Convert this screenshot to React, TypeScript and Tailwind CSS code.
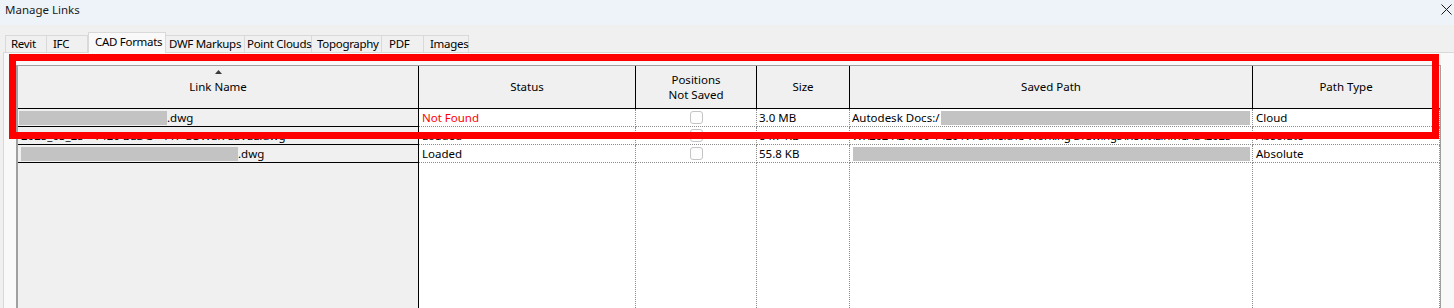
import React from 'react';

type Row = {
  linkBox?: number;
  linkText: string;
  status: string;
  notFound?: boolean;
  size: string;
  pathText?: string;
  pathBox?: boolean;
  pathType: string;
};

const rows: Row[] = [
  { linkBox: 148, linkText: '.dwg', status: 'Not Found', notFound: true, size: '3.0 MB', pathText: 'Autodesk Docs:/', pathBox: true, pathType: 'Cloud' },
  { linkText: '2025_03_25 - 1420 BLDG - TYP LOWER LEVEL.dwg', status: 'Loaded', size: '84.7 KB', pathText: 'W:\\2024\\24060-1420 N Fairfield\\C-Working Drawings\\Revit\\Link\\CAD\\2025', pathType: 'Absolute' },
  { linkBox: 217, linkText: '.dwg', status: 'Loaded', size: '55.8 KB', pathBox: true, pathType: 'Absolute' },
];

// 탭 폭과 글자 시작 위치
const tabs = [
  { label: 'Revit', w: 'w-[42px] border-l', pl: 'pl-[5px]' },
  { label: 'IFC', w: 'w-[41px]', pl: 'pl-[6px]' },
  { label: 'CAD Formats', w: 'w-[78px]', pl: 'pl-[6px]', active: true },
  { label: 'DWF Markups', w: 'w-[79px]', pl: 'pl-[3px]' },
  { label: 'Point Clouds', w: 'w-[67px]', pl: 'pl-[2px]' },
  { label: 'Topography', w: 'w-[70px]', pl: 'pl-[5px]' },
  { label: 'PDF', w: 'w-[42px]', pl: 'pl-[7px]' },
  { label: 'Images', w: 'w-[45px]', pl: 'pl-[6px]' },
];

const Redact = ({ className }: { className: string }) => (
  <span className={`h-[14px] bg-[#c3c3c3] flex-none ${className}`} />
);

const CheckBox = () => (
  <span className="w-[13px] h-[13px] rounded-[3px] border border-[#c4c4c4] bg-[#fdfdfd]" />
);

const cell = 'h-full flex items-center overflow-hidden whitespace-nowrap border-r border-b border-dotted border-[#8c8c8c]';

export default function App() {
  return (
    <div className="relative w-[1454px] h-[308px] overflow-hidden bg-[#f0f0f0] flex flex-col font-['Noto_Sans',sans-serif] text-[11.5px] text-black">
      {/* 제목 표시줄 */}
      <div className="h-[25px] flex-none flex justify-between bg-[#eef3f9]">
        <span className="pl-[5px] pt-[2px] leading-[16px] text-[11.5px] text-[#1a1a1a]">Manage Links</span>
        <svg className="mt-[4px] mr-[2px]" width="11" height="11" viewBox="0 0 11 11">
          <path d="M0.5 0.5L10.5 10.5M10.5 0.5L0.5 10.5" stroke="#1a1a1a" strokeWidth="1" fill="none" />
        </svg>
      </div>

      {/* 탭 */}
      <div className="h-[27px] flex-none flex items-end pl-[5px] whitespace-nowrap tracking-[-0.3px]">
        {tabs.map((t) =>
          t.active ? (
            <div
              key={t.label}
              className={`${t.w} ${t.pl} relative z-10 -mb-[1px] h-[21px] flex-none flex items-center pb-[2px] bg-[#f9f9f9] border-l border-t border-r border-[#d9d9d9] leading-[16px]`}
            >
              {t.label}
            </div>
          ) : (
            <div
              key={t.label}
              className={`${t.w} ${t.pl} h-[17px] flex-none flex items-center border-t border-r border-[#d9d9d9] leading-[16px]`}
            >
              {t.label}
            </div>
          )
        )}
      </div>

      {/* 탭 패널 */}
      <div className="flex-1 flex flex-col ml-[3px] border-l border-t border-[#d9d9d9] bg-[#f9f9f9] pl-[12px] pt-[12px]">
        <div className="flex-1 flex flex-col w-[1425px] border-l-2 border-t border-r border-[#a0a0a0] bg-white">
          {/* 헤더 */}
          <div className="h-[43px] flex-none flex bg-[#f0f0f0] border-b border-black">
            <div className="relative w-[401px] h-full flex items-center justify-center border-r border-black">
              <svg className="absolute top-[4px] left-[197px]" width="7" height="4" viewBox="0 0 7 4">
                <polygon points="3.5,0 7,4 0,4" fill="#3a3a3a" />
              </svg>
              Link Name
            </div>
            <div className="w-[217px] h-full flex items-center justify-center border-r border-black">Status</div>
            <div className="w-[121px] h-full flex flex-col items-center justify-center leading-[15px] border-r border-black">
              <span>Positions</span>
              <span>Not Saved</span>
            </div>
            <div className="w-[93px] h-full flex items-center justify-center border-r border-black">Size</div>
            <div className="w-[403px] h-full flex items-center justify-center border-r border-black">Saved Path</div>
            <div className="w-[187px] h-full flex items-center justify-center border-r border-[#f0f0f0]">Path Type</div>
          </div>

          {/* 행 */}
          {rows.map((r, i) => (
            <div key={i} className="h-[18px] flex-none flex">
              <div className="w-[401px] h-full flex items-center overflow-hidden whitespace-nowrap bg-[#f0f0f0] border-r border-b border-black pl-[1px]">
                {r.linkBox === 148 && <Redact className="w-[148px]" />}
                {r.linkBox === 217 && <Redact className="w-[217px] ml-[2px]" />}
                <span className={r.linkBox ? '' : 'pl-[2px]'}>{r.linkText}</span>
              </div>
              <div className={`w-[217px] pl-[3px] ${cell} ${r.notFound ? 'text-[#ff0000]' : ''}`}>{r.status}</div>
              <div className={`w-[121px] justify-center ${cell}`}>
                <CheckBox />
              </div>
              <div className={`w-[93px] pl-[2px] ${cell}`}>{r.size}</div>
              <div className={`w-[403px] pl-[2px] ${cell}`}>
                {r.pathText && (
                  <span className={r.pathBox ? 'flex-none' : 'flex-1 min-w-0 overflow-hidden tracking-[-0.3px]'}>{r.pathText}</span>
                )}
                {r.pathBox && <span className="flex-1 h-[14px] bg-[#c3c3c3] ml-[1px] mr-[2px]" />}
              </div>
              <div className={`w-[187px] pl-[3px] ${cell}`}>{r.pathType}</div>
            </div>
          ))}

          {/* 빈 영역 */}
          <div className="flex-1 flex">
            <div className="w-[401px] bg-[#f0f0f0] border-r border-black" />
            <div className="w-[217px] border-r border-dotted border-[#8c8c8c]" />
            <div className="w-[121px] border-r border-dotted border-[#8c8c8c]" />
            <div className="w-[93px] border-r border-dotted border-[#8c8c8c]" />
            <div className="w-[403px] border-r border-dotted border-[#8c8c8c]" />
            <div className="w-[187px] border-r border-dotted border-[#8c8c8c]" />
          </div>
        </div>
      </div>

      {/* 빨간 강조 상자 */}
      <div className="absolute left-[9px] top-[54px] w-[1430px] h-[85px] border-[7px] border-[#ff0000] pointer-events-none" />
    </div>
  );
}
